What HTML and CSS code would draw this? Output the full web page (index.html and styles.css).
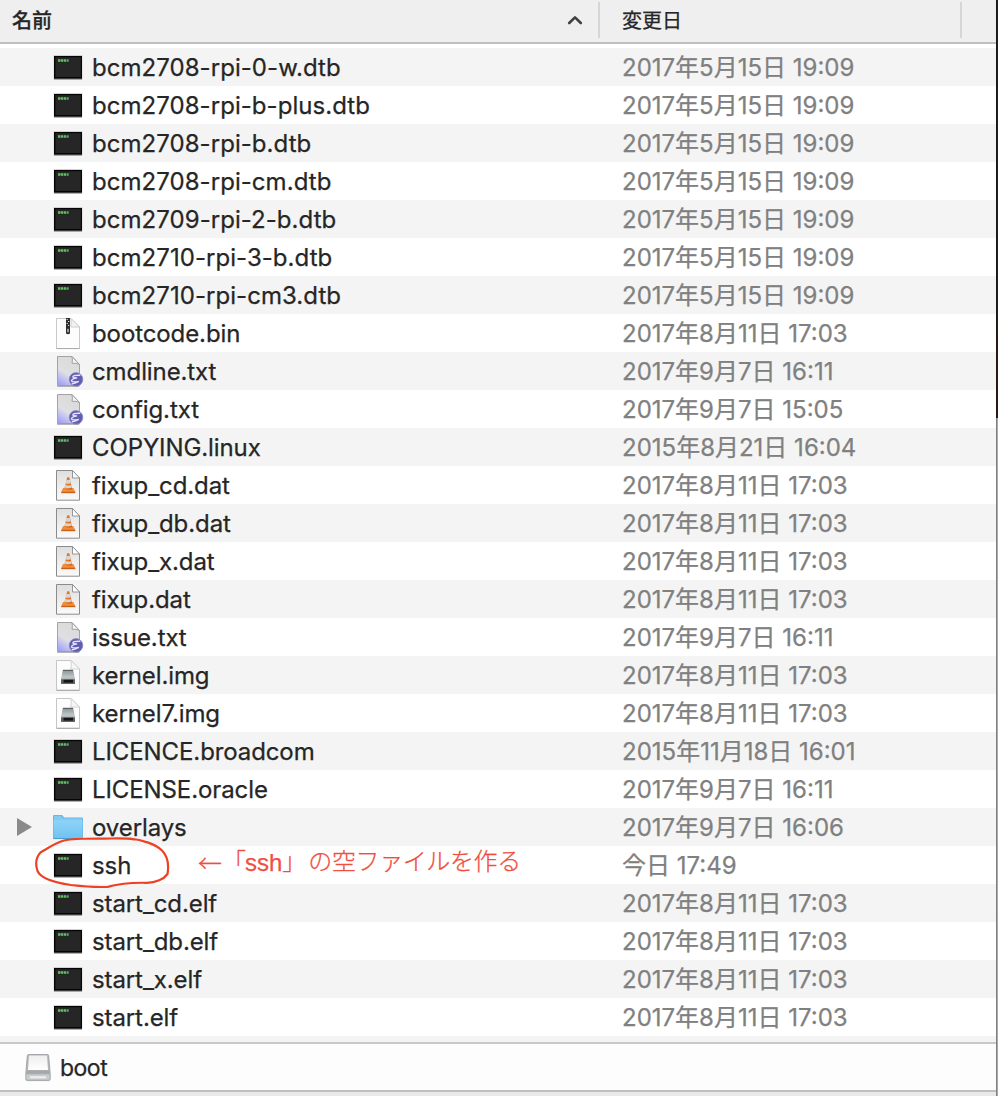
FILE: index.html
```
<!DOCTYPE html>
<html lang="ja">
<head>
    <meta charset="UTF-8">
    <title>boot</title>
    <link rel="stylesheet" href="styles.css">
</head>
<body>
    <svg class="defs" width="0" height="0">
        <defs>
            <linearGradient id="gradPage" x1="0" y1="0" x2="0" y2="1">
                <stop offset="0" stop-color="#dedede"/>
                <stop offset="1" stop-color="#fafafa"/>
            </linearGradient>
            <linearGradient id="gradText" x1="0.6" y1="0" x2="0.1" y2="1">
                <stop offset="0" stop-color="#dadada"/>
                <stop offset="0.55" stop-color="#dfdfe4"/>
                <stop offset="1" stop-color="#9c9cfa"/>
            </linearGradient>
            <linearGradient id="gradFolder" x1="0" y1="0" x2="0" y2="1">
                <stop offset="0" stop-color="#8fd3f8"/>
                <stop offset="1" stop-color="#6fc2f1"/>
            </linearGradient>
            <linearGradient id="gradDisk" x1="0" y1="0" x2="0" y2="1">
                <stop offset="0" stop-color="#8b9294"/>
                <stop offset="0.5" stop-color="#c0c7c8"/>
                <stop offset="1" stop-color="#7d8587"/>
            </linearGradient>
            <linearGradient id="gradDrive" x1="0" y1="0" x2="0" y2="1">
                <stop offset="0" stop-color="#eeeeee"/>
                <stop offset="1" stop-color="#ffffff"/>
            </linearGradient>
            <linearGradient id="gradCone" x1="0" y1="0" x2="1" y2="0">
                <stop offset="0" stop-color="#f0903c"/>
                <stop offset="1" stop-color="#cf5c10"/>
            </linearGradient>
        </defs>
        <symbol id="icon-exec" viewBox="0 0 32 38">
            <rect x="1.5" y="8" width="29" height="24" rx="1" fill="#000" opacity="0.12"/>
            <rect x="2" y="30" width="28" height="1.6" fill="#000" opacity="0.35"/>
            <rect x="1.6" y="7" width="28.8" height="1.2" fill="#c3d6df"/>
            <rect x="2" y="8" width="28" height="22.6" fill="#060606"/>
            <rect x="3.4" y="9.2" width="25.4" height="19.8" fill="#262626"/>
            <path d="M6 12.5h10.5" stroke="#3d7a3d" stroke-width="2"/>
            <path d="M6 12.5h2.2M9 12.5h2M12 12.5h2M15.3 12.5h1.2" stroke="#62b862" stroke-width="2.4"/>
        </symbol>
        <symbol id="icon-bin" viewBox="0 0 32 38">
            <path d="M4.5 4.5h14.5l8.5 8.5v21.5h-23z" fill="#fdfdfd" stroke="#c9c9c9"/>
            <path d="M4.5 34.6h23" stroke="#aaa"/>
            <path d="M19 4.5v8.5h8.5z" fill="#f2f2f2" stroke="#cfcfcf"/>
            <path d="M14 4h4v15.500q-2 1.500-4 0z" fill="#303030"/>
            <path d="M14.6 5.5h1.2M16 7.5h1.2M14.6 9.5h1.2M16 11.500h1.2" stroke="#d8d8d8" stroke-width="1.1"/>
            <rect x="15.4" y="14.8" width="1.2" height="3.4" fill="#ddd"/>
        </symbol>
        <symbol id="icon-text" viewBox="0 0 32 38">
            <path d="M5.5 4.5h14.5l7.5 8v21h-22z" fill="url(#gradText)" stroke="#a3a3a3"/>
            <path d="M5.2 34.3h22" stroke="#8c8c8c" stroke-width="0.8"/>
            <path d="M19.8 4.5q1.200 3 0.200 6.800 4-0.600 7.500 1.200z" fill="#f4f4f4" stroke="#9b9b9b" stroke-width="0.9"/>
            <circle cx="24" cy="27.4" r="6.8" fill="#625db0" stroke="#8f8bc6" stroke-width="0.8"/>
            <path d="M27.800 23.200q-6.800-0.200-6.900 1.700 0.200 1.100 4.200 1-5.600 0.900-5.600 3.100 0.400 1.600 7.300 0.500-3 1.900-6.500 2.200" fill="none" stroke="#e6e5f6" stroke-width="1.400" stroke-linecap="round"/>
        </symbol>
        <symbol id="icon-vlc" viewBox="0 0 32 38">
            <path d="M4.500 4.500h16l7 7.500v22.200h-23z" fill="url(#gradPage)" stroke="#8b8b8b"/>
            <path d="M20.500 4.500v7.500h7z" fill="#fff" stroke="#8b8b8b" stroke-width="0.9"/>
            <path d="M11 22h10.400l1.900 4.200H9.200z" fill="#f08c3a"/>
            <path d="M9.200 25.800h14.100v1.400H9.200z" fill="#c9601a"/>
            <path d="M15.200 11.300h2l3 11.700q-4 2-8 0z" fill="url(#gradCone)"/>
            <path d="M14.500 14h3.400l0.900 3.200q-2.600 1-5.200 0zM13.200 19q3 1 6 0l0.700 2.400q-3.700 1.500-7.400 0z" fill="#d6d6d6"/>
        </symbol>
        <symbol id="icon-img" viewBox="0 0 32 38">
            <path d="M4.5 4.5h14.5l8.5 8.5v21.2h-23z" fill="#fdfdfd" stroke="#c6c6c6"/>
            <path d="M4.500 34.400h23" stroke="#aaa"/>
            <path d="M19 4.500q0.800 5-0.400 8.500h8.900z" fill="#f7f7f7" stroke="#cfcfcf" stroke-width="0.9"/>
            <path d="M10.800 14h10.400l1.800 9v5H9v-5z" fill="url(#gradDisk)"/>
            <path d="M11 14.300h10" stroke="#4f5557"/>
            <rect x="9" y="23.400" width="14" height="4.400" fill="#5b6061"/>
            <rect x="11.500" y="23.800" width="9.500" height="2.800" fill="#151515"/>
        </symbol>
        <symbol id="icon-folder" viewBox="0 0 32 38">
            <path d="M1 8.3q0-1.3 1.3-1.3h7.2q0.9 0 1.5 0.9l1 1.5h17.7q1.3 0 1.3 1.3v19.3q0 1-1 1H2q-1 0-1-1z" fill="#5fb2e2"/>
            <path d="M1.8 8.6q0-0.8 0.8-0.8h6.7l1.7 2.5h19.2v3H1.8z" fill="#83c9f0"/>
            <path d="M1.5 12.4h29v17.8h-29z" fill="url(#gradFolder)"/>
            <path d="M1.4 30.6h29.2" stroke="#4b9bcb" stroke-width="0.9"/>
        </symbol>
        <symbol id="icon-drive" viewBox="0 0 26 30">
            <path d="M3.6 1.5h18.8q1.2 0 1.3 1.2l1.5 17.8v5.5q0 1.6-1.6 1.6H2.4Q0.8 27.6 0.8 26v-5.500L2.3 2.7q0.1-1.2 1.3-1.2z" fill="#b4b6b7" stroke="#979c9f" stroke-width="0.8"/>
            <path d="M4 2.4h18l1 14.7H3z" fill="url(#gradDrive)"/>
            <path d="M2.5 17.6h21l1 3.2h-23z" fill="#a4a8aa"/>
            <rect x="1.4" y="21.6" width="23.2" height="5" rx="1" fill="#c9cccd"/>
            <rect x="5" y="23.2" width="16" height="2.2" fill="#eceeee"/>
        </symbol>
    </svg>

    <div class="window">
        <div class="header">
            <div class="col-name">
                <span>名前</span>
                <svg class="sort" width="16" height="10" viewBox="0 0 16 10"><path d="M2.2 8L8 2.4 13.8 8" fill="none" stroke="#404040" stroke-width="2.6" stroke-linecap="round" stroke-linejoin="round"/></svg>
            </div>
            <div class="col-date">変更日</div>
            <div class="col-rest"></div>
        </div>

        <div class="list" id="fileList">
            <!-- Rows are added by the script below -->
        </div>

        <div class="pathbar">
            <svg class="drive" width="26" height="30"><use href="#icon-drive"/></svg>
            <span>boot</span>
        </div>
        <div class="bottom"></div>
    </div>
    <div class="desktop"></div>

    <script>
        const files = [
            ['exec', 'bcm2708-rpi-0-w.dtb', '2017年5月15日 19:09'],
            ['exec', 'bcm2708-rpi-b-plus.dtb', '2017年5月15日 19:09'],
            ['exec', 'bcm2708-rpi-b.dtb', '2017年5月15日 19:09'],
            ['exec', 'bcm2708-rpi-cm.dtb', '2017年5月15日 19:09'],
            ['exec', 'bcm2709-rpi-2-b.dtb', '2017年5月15日 19:09'],
            ['exec', 'bcm2710-rpi-3-b.dtb', '2017年5月15日 19:09'],
            ['exec', 'bcm2710-rpi-cm3.dtb', '2017年5月15日 19:09'],
            ['bin', 'bootcode.bin', '2017年8月11日 17:03'],
            ['text', 'cmdline.txt', '2017年9月7日 16:11'],
            ['text', 'config.txt', '2017年9月7日 15:05'],
            ['exec', 'COPYING.linux', '2015年8月21日 16:04'],
            ['vlc', 'fixup_cd.dat', '2017年8月11日 17:03'],
            ['vlc', 'fixup_db.dat', '2017年8月11日 17:03'],
            ['vlc', 'fixup_x.dat', '2017年8月11日 17:03'],
            ['vlc', 'fixup.dat', '2017年8月11日 17:03'],
            ['text', 'issue.txt', '2017年9月7日 16:11'],
            ['img', 'kernel.img', '2017年8月11日 17:03'],
            ['img', 'kernel7.img', '2017年8月11日 17:03'],
            ['exec', 'LICENCE.broadcom', '2015年11月18日 16:01'],
            ['exec', 'LICENSE.oracle', '2017年9月7日 16:11'],
            ['folder', 'overlays', '2017年9月7日 16:06'],
            ['exec', 'ssh', '今日 17:49'],
            ['exec', 'start_cd.elf', '2017年8月11日 17:03'],
            ['exec', 'start_db.elf', '2017年8月11日 17:03'],
            ['exec', 'start_x.elf', '2017年8月11日 17:03'],
            ['exec', 'start.elf', '2017年8月11日 17:03']
        ];

        const note = `
            <svg class="circle" width="140" height="54" viewBox="0 0 140 54"><path d="M100 3.5C90 1.5 76 3 64 2.5C50 2.5 38 2.8 30 4.5C22 6.5 14 12 6.5 16.5C1.5 22 1.5 29 3.5 35C6.5 42 20 46.5 37 49C50 50.500 62 51.500 74 50.800C84 48.500 92 46.500 112 46.800C122 47 130 43 133.500 38C135 29 133.500 20 128 14.500C122 8.500 108 3.500 96 2.500" fill="none" stroke="#ee4023" stroke-width="2.2" stroke-linecap="round"/></svg>
            <div class="note"><span class="arrow">←</span><span class="open">「</span><span class="latin">ssh</span><span class="close">」</span><span class="kana">の空ファイルを作る</span></div>`;

        const list = document.getElementById('fileList');
        files.forEach(([icon, name, date]) => {
            const row = document.createElement('div');
            row.className = name === 'ssh' ? 'row marked' : 'row';
            row.innerHTML = `
                <div class="toggle">${icon === 'folder' ? '<svg width="16" height="18"><path d="M0 0L15 9 0 18z" fill="#8a8a8a"/></svg>' : ''}</div>
                <svg class="icon" width="32" height="38"><use href="#icon-${icon}"/></svg>
                <div class="name ${name.startsWith('bcm') ? 'wide' : ''}">${name}</div>
                <div class="date">${date}</div>
                ${name === 'ssh' ? note : ''}
            `;
            list.appendChild(row);
        });
    </script>
</body>
</html>
```
FILE: styles.css
```
* { box-sizing: border-box; }
body { margin: 0; width: 998px; height: 1096px; display: flex; overflow: hidden; background: #fff; font-family: Inter, "Noto Sans CJK JP", sans-serif; font-size: 24px; color: #262626; -webkit-text-stroke: 0.25px; }
.defs { position: absolute; }

.window { width: 996px; display: flex; flex-direction: column; }
.desktop { width: 2px; background: linear-gradient(to bottom, #17171a 0, #17171a 310px, #24170f 340px, #24170f 418px, #808080 418px) 0 0 / 1px 100% no-repeat, linear-gradient(to bottom, #222225 0, #222225 310px, #2e1d12 340px, #2e1d12 418px, #aaaaaa 418px, #a8a8a8 100%); }

.header { height: 44px; display: flex; background: #efefef; border-bottom: 2px solid #bfbfbf; font-size: 20px; line-height: 38px; }
.header > div { height: 36px; margin-top: 2px; }
.col-name { width: 600px; padding: 0 15px 0 12px; display: flex; justify-content: space-between; border-right: 2px solid #d6d6d6; font-weight: 500; }
.sort { margin-top: 13px; }
.col-date { width: 362px; padding-left: 22px; border-right: 2px solid #d6d6d6; }

.list { height: 998px; padding-top: 4px; background: linear-gradient(to bottom, #fff 992px, #f4f4f4 992px); }
.row { height: 38px; display: flex; position: relative; line-height: 40px; white-space: nowrap; }
.row:nth-child(odd) { background: #f4f4f4; }
.marked { z-index: 1; }
.toggle { width: 52px; padding: 10px 0 0 17px; line-height: 0; }
.icon { flex: none; }
.name { width: 538px; padding-left: 8px; letter-spacing: -0.1px; }
.name.wide { letter-spacing: 0.05px; }
.date { color: #808080; }

.circle { position: absolute; left: 34px; top: -10px; }
.note { position: absolute; left: 198px; top: -3px; display: flex; line-height: 38px; color: #f04e3e; font-family: "Liberation Sans", "Noto Sans CJK JP", sans-serif; font-weight: 300; }
.arrow { width: 24px; font-family: "Noto Sans CJK JP", sans-serif; }
.open { width: 23px; }
.latin { position: relative; top: 1px; }
.close { width: 26px; }
.kana { letter-spacing: -0.4px; }

.pathbar { height: 50px; display: flex; align-items: center; padding-left: 25px; background: #fdfdfd; border-top: 2px solid #c8c8c8; border-bottom: 2px solid #c0bfc0; }
.pathbar .drive { margin-top: 2px; }
.pathbar span { margin: 2px 0 0 9px; font-size: 23px; letter-spacing: -0.5px; }
.bottom { height: 4px; background: #e9e8ea; }
```
